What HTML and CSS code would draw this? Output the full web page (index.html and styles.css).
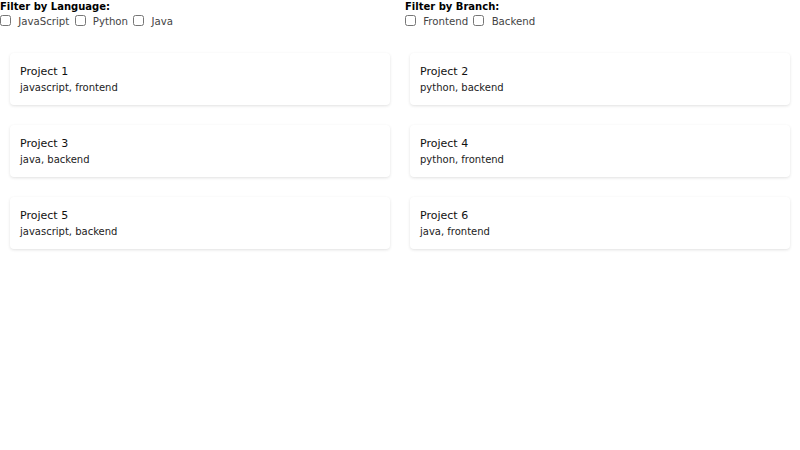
FILE: index.html
```html
<!DOCTYPE html>
<html lang="en">
<head>
  <meta charset="UTF-8" />
  <title>Projects</title>
  <link rel="stylesheet" href="styles.css">
</head>
<body>
  <div class="filters">
    <div class="filter-group">
      <h3>Filter by Language:</h3>
      <label><input type="checkbox" value="javascript" /> JavaScript</label>
      <label><input type="checkbox" value="python" /> Python</label>
      <label><input type="checkbox" value="java" /> Java</label>
    </div>
    <div class="filter-group">
      <h3>Filter by Branch:</h3>
      <label><input type="checkbox" value="frontend" /> Frontend</label>
      <label><input type="checkbox" value="backend" /> Backend</label>
    </div>
  </div>

  <div class="projects">
    <div class="project">
      <h4>Project 1</h4>
      <p>javascript, frontend</p>
    </div>
    <div class="project">
      <h4>Project 2</h4>
      <p>python, backend</p>
    </div>
    <div class="project">
      <h4>Project 3</h4>
      <p>java, backend</p>
    </div>
    <div class="project">
      <h4>Project 4</h4>
      <p>python, frontend</p>
    </div>
    <div class="project">
      <h4>Project 5</h4>
      <p>javascript, backend</p>
    </div>
    <div class="project">
      <h4>Project 6</h4>
      <p>java, frontend</p>
    </div>
  </div>
</body>
</html>
```

FILE: styles.css
```css
* {
  box-sizing: border-box;
}

body {
  margin: 0;
  background: #fff;
  font-family: 'DejaVu Sans', sans-serif;
  color: #000;
}

.filters {
  display: flex;
  gap: 10px;
}

.filter-group {
  flex: 1;
  font-size: 10px;
  line-height: 15px;
}

.filter-group h3 {
  margin: 0;
  font-size: 10px;
  font-weight: bold;
  line-height: 14px;
}

.filter-group label {
  display: inline-block;
  font-size: 10.2px;
  color: #444;
  margin-right: 2px;
  line-height: 15px;
}

.filter-group input[type="checkbox"] {
  width: 11px;
  height: 11px;
  margin: 0 4px 0 0;
  vertical-align: -1px;
}

.projects {
  display: grid;
  grid-template-columns: 1fr 1fr;
  gap: 20px;
  padding: 10px;
  margin-top: 14px;
}

.project {
  background: #fff;
  border-radius: 4px;
  box-shadow: 0 1px 3px rgba(0, 0, 0, 0.12);
  padding: 10px;
}

.project h4 {
  margin: 0;
  font-size: 11px;
  font-weight: normal;
  line-height: 17px;
  color: #111;
}

.project p {
  margin: 0;
  font-size: 10px;
  line-height: 15px;
  color: #222;
}
```
